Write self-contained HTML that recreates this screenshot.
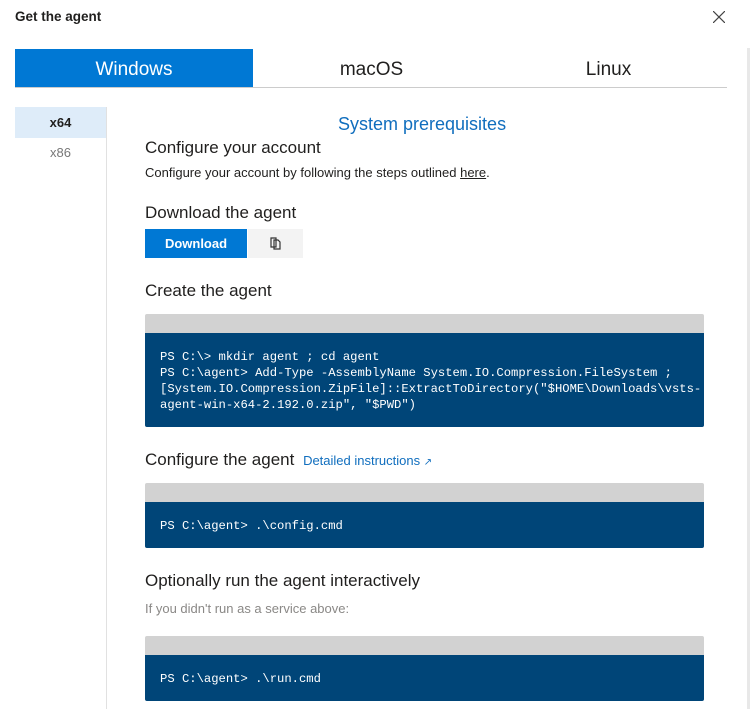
<!DOCTYPE html>
<html><head><style>
*{margin:0;padding:0;box-sizing:border-box}
body{width:750px;height:709px;overflow:hidden;background:#fff;font-family:"Liberation Sans",sans-serif;color:#201f1e;position:relative}
.a{position:absolute;white-space:nowrap}
.h{font-size:17px;color:#201f1e}
.code{position:absolute;left:145px;width:559px;border-radius:2px;overflow:hidden}
.code .g{height:19px;background:#d2d2d2}
.code .b{background:#004578;color:#fff;font-family:"Liberation Mono",monospace;font-size:12.2px;line-height:16px;padding:16px 15px 15px}
</style></head><body>
<div class="a" style="left:15px;top:9px;font-size:13.5px;font-weight:bold">Get the agent</div>
<svg class="a" style="left:713px;top:11px" width="12" height="12"><path d="M0 0L12 12M12 0L0 12" stroke="#444" stroke-width="1.2"/></svg>
<div class="a" style="left:747px;top:48px;width:3px;height:661px;background:#e8e8e8"></div>
<div class="a" style="left:15px;top:49px;width:238px;height:38px;background:#0078d4;color:#fff;font-size:19px;text-align:center;line-height:42px">Windows</div>
<div class="a" style="left:253px;top:49px;width:237px;height:38px;font-size:19px;text-align:center;line-height:42px">macOS</div>
<div class="a" style="left:490px;top:49px;width:237px;height:38px;font-size:19px;text-align:center;line-height:42px">Linux</div>
<div class="a" style="left:15px;top:87px;width:712px;height:1px;background:#ccc"></div>
<div class="a" style="left:15px;top:107px;width:91px;height:31px;background:#deecf9;font-size:13px;font-weight:bold;text-align:center;line-height:31px">x64</div>
<div class="a" style="left:15px;top:145px;width:91px;font-size:13px;color:#777;text-align:center">x86</div>
<div class="a" style="left:106px;top:107px;width:1px;height:602px;background:#e1e1e1"></div>
<div class="a" style="left:338px;top:114px;font-size:18px;color:#106ebe">System prerequisites</div>
<div class="a h" style="left:145px;top:138px">Configure your account</div>
<div class="a" style="left:145px;top:165px;font-size:13px">Configure your account by following the steps outlined <u>here</u>.</div>
<div class="a h" style="left:145px;top:203px">Download the agent</div>
<div class="a" style="left:145px;top:229px;width:102px;height:29px;background:#0078d4;color:#fff;font-size:13px;font-weight:bold;text-align:center;line-height:30px">Download</div>
<div class="a" style="left:248px;top:229px;width:55px;height:29px;background:#f3f3f3"></div>
<svg class="a" style="left:270px;top:237px" width="12" height="13"><path d="M1 1h5v9H1zM4 3h4l2 2v7H4z" fill="none" stroke="#333" stroke-width="1.2"/></svg>
<div class="a h" style="left:145px;top:281px">Create the agent</div>
<div class="code" style="top:314px"><div class="g"></div><div class="b" style="height:94px">PS C:\&gt; mkdir agent ; cd agent<br>PS C:\agent&gt; Add-Type -AssemblyName System.IO.Compression.FileSystem ;<br>[System.IO.Compression.ZipFile]::ExtractToDirectory("$HOME\Downloads\vsts-<br>agent-win-x64-2.192.0.zip", "$PWD")</div></div>
<div class="a h" style="left:145px;top:450px">Configure the agent <span style="font-size:13px;color:#106ebe;margin-left:4px">Detailed instructions <span style="font-size:10px">↗</span></span></div>
<div class="code" style="top:483px"><div class="g"></div><div class="b" style="height:46px">PS C:\agent&gt; .\config.cmd</div></div>
<div class="a h" style="left:145px;top:571px">Optionally run the agent interactively</div>
<div class="a" style="left:145px;top:601px;font-size:13px;color:#8a8886">If you didn't run as a service above:</div>
<div class="code" style="top:636px"><div class="g"></div><div class="b" style="height:46px">PS C:\agent&gt; .\run.cmd</div></div>
</body></html>
